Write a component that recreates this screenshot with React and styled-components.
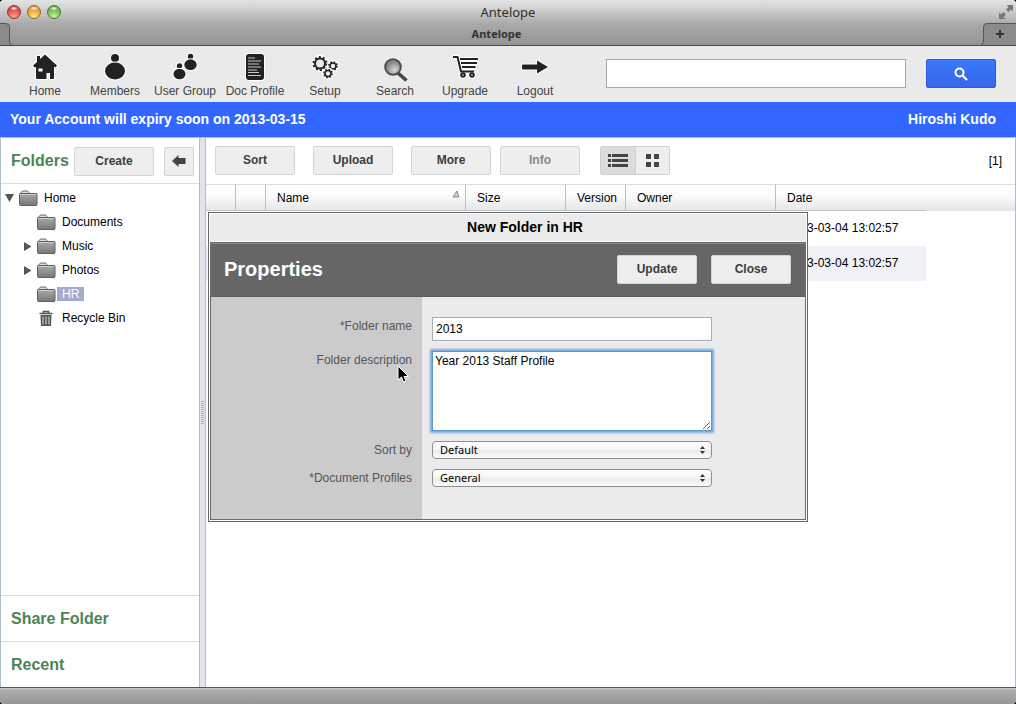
import React from "react";
import styled, { createGlobalStyle, css } from "styled-components";

const GlobalStyle = createGlobalStyle`
  *, *::before, *::after { box-sizing: border-box; }
  body { margin: 0; background: #000; }
  body, button, input, textarea, select {
    font-family: "Liberation Sans", Arial, sans-serif;
    font-size: 12px;
    line-height: 16px;
  }
  h1, h2, h3, p, ul { margin: 0; padding: 0; }
  svg { display: block; }
`;

const Window = styled.div`
  min-height: 100vh;
  display: flex;
  flex-direction: column;
  overflow: hidden;
  border-radius: 4px;
  background: #fff;
  color: #000;
`;

/* ---------- window chrome ---------- */

const Chrome = styled.header`
  background: linear-gradient(#e4e4e4, #c9c9c9 12px, #a9a9a9 24px, #949494);
  border-bottom: 1px solid #4a4a4a;
`;

const TitleBar = styled.div`
  height: 23px;
  display: grid;
  grid-template-columns: 100px 1fr 100px;
  align-items: center;
  padding: 0 3px;
`;

const Lights = styled.div`
  display: flex;
  gap: 6px;
  padding-left: 4px;
`;

const Light = styled.button`
  width: 14px;
  height: 14px;
  padding: 0;
  border: 1px solid ${(p) => p.$edge};
  border-radius: 50%;
  background: radial-gradient(ellipse 4px 2px at 50% 20%, #fff, transparent),
    radial-gradient(circle at 50% 90%, ${(p) => p.$glow}, ${(p) => p.$tone} 70%);
`;

const WindowTitle = styled.h1`
  text-align: center;
  font: 400 13px/16px "Noto Sans", sans-serif;
  color: #2e2e2e;
`;

const ExpandButton = styled.button`
  justify-self: end;
  padding: 0;
  border: 0;
  background: none;
`;

const TabBar = styled.div`
  height: 22px;
  display: flex;
`;

const ActiveTab = styled.div`
  flex: 1;
  text-align: center;
  font: 700 11px/22px "Noto Sans", sans-serif;
  color: #333;
`;

const NewTab = styled.button`
  padding: 0;
  border: 0;
  background: none;
`;

/* ---------- top navigation ---------- */

const TopNav = styled.div`
  min-height: 56px;
  display: flex;
  justify-content: space-between;
  padding: 0 20px 0 10px;
  background: #eaeaea;
`;

const NavList = styled.nav`
  display: flex;
`;

const NavLink = styled.a`
  width: 70px;
  padding-top: 6px;
  display: flex;
  flex-direction: column;
  align-items: center;
  gap: 1px;
  color: #444;
  text-decoration: none;
  white-space: nowrap;
`;

const SearchForm = styled.form`
  display: flex;
  gap: 20px;
  padding-top: 13px;
`;

const SearchInput = styled.input`
  width: 300px;
  height: 29px;
  border: 1px solid #a9a9a9;
  border-radius: 0;
  background: #fff;
`;

const SearchButton = styled.button`
  width: 70px;
  height: 29px;
  display: grid;
  place-items: center;
  padding: 0;
  border: 1px solid #2f5bd8;
  border-radius: 2px;
  background: linear-gradient(#3c78fb, #3567ea);
`;

const Banner = styled.div`
  min-height: 35px;
  display: flex;
  justify-content: space-between;
  padding: 9px 20px 0 10px;
  background: #3366ff;
  color: #fff;
  font-size: 14px;
  font-weight: 700;
`;

/* ---------- shared ---------- */

const Button = styled.button`
  width: ${(p) => (p.$compact ? 30 : 80)}px;
  height: 29px;
  display: grid;
  place-items: center;
  padding: 0 0 1px;
  border: 1px solid #d4d4d4;
  border-radius: 2px;
  background: #eee;
  color: ${(p) => (p.disabled ? "#888" : "#3c3c3c")};
  font-weight: 700;
`;

/* ---------- body ---------- */

const Workspace = styled.div`
  flex: 1;
  display: flex;
  border: solid #aebfc7;
  border-width: 1px 1px 0;
`;

const Sidebar = styled.aside`
  width: 198px;
  display: flex;
  flex-direction: column;
`;

const SidebarHeader = styled.div`
  height: 46px;
  display: flex;
  align-items: center;
  padding: 0 5px 0 10px;
  border-bottom: 1px solid #d9dfe2;
  justify-content: space-between;
`;

const SidebarTitle = styled.h2`
  font-size: 16px;
  line-height: 20px;
  font-weight: 700;
  color: #4b8555;
`;

const HeaderButtons = styled.div`
  display: flex;
  gap: 10px;
  padding-top: 1px;
`;

const Tree = styled.ul`
  flex: 1;
  padding-top: 2px;
  list-style: none;
`;

const TreeItem = styled.li`
  height: 24px;
  display: grid;
  grid-template-columns: 12px 19px 1fr;
  column-gap: 3px;
  align-items: center;
  padding-left: ${(p) => (p.$depth ? 21 : 3)}px;
`;

const TreeLabel = styled.span`
  justify-self: start;
  padding: 0 5px;
  line-height: 14px;
  margin-left: -2px;
  ${(p) =>
    p.$selected &&
    css`
      background: #a5abcd;
      color: #fff;
    `}
`;

const Section = styled.section`
  height: 46px;
  display: flex;
  align-items: center;
  padding-left: 10px;
  border-top: 1px solid #d9dfe2;
`;

const Splitter = styled.div`
  width: 7px;
  display: grid;
  place-items: center;
  border: solid #aebfc7;
  border-width: 0 1px;
  background: #e1e4ea;
`;

const Grip = styled.div`
  width: 3px;
  height: 24px;
  background: repeating-linear-gradient(#a9b6c8 0 1px, transparent 1px 2px);
`;

const Main = styled.main`
  flex: 1;
  min-width: 0;
  position: relative;
`;

const Actions = styled.div`
  height: 46px;
  display: flex;
  align-items: center;
  gap: 9px;
  padding: 0 13px 2px 9px;
`;

const ActionGroup = styled.div`
  display: flex;
  gap: 18px;
`;

const ViewSwitch = styled.div`
  display: flex;
  margin-left: 11px;
  border: 1px solid #d0d0d0;
  border-radius: 2px;
`;

const ViewButton = styled.button`
  width: 34px;
  height: 27px;
  display: grid;
  place-items: center;
  padding: 0;
  border: 0;
  background: ${(p) => (p.$active ? "#dcdcdc" : "#eee")};
  & + & { border-left: 1px solid #d0d0d0; }
`;

const PageCount = styled.span`
  margin-left: auto;
  padding-top: 2px;
`;

const Files = styled.table`
  width: 100%;
  table-layout: fixed;
  border-collapse: separate;
  border-spacing: 0;
`;

const FilesHead = styled.thead`
  th {
    height: 27px;
    padding: 0 0 0 11px;
    background: linear-gradient(#fff, #fbfbfc 40%, #e6e7ea);
    border-top: 1px solid #dcdfe2;
    border-bottom: 1px solid #b9c4cb;
    border-right: 1px solid #b4c0c8;
    text-align: left;
    font-weight: 400;
  }
  th:nth-last-child(-n + 2) { border-right: 0; }
  th:last-child { border-bottom-color: #e2e2e4; }
`;

const HeadCell = styled.div`
  display: flex;
  justify-content: space-between;
  padding-right: 5px;
`;

const Row = styled.tr`
  td {
    height: 35px;
    padding: 0 0 2px 11px;
    white-space: nowrap;
    overflow: hidden;
    background: ${(p) => (p.$striped ? "#eff1f5" : "#fff")};
  }
  td:last-child { background: #fff; }
`;

/* ---------- dialog ---------- */

const Dialog = styled.section`
  position: absolute;
  left: 2px;
  top: 74px;
  width: 600px;
  padding: 1px;
  border: 1px solid #666;
  background: #fff;
`;

const DialogTitle = styled.h2`
  padding: 0 0 1px 34px;
  background: #ebebeb;
  text-align: center;
  font-size: 14px;
  line-height: 26px;
  font-weight: 700;
`;

const Panel = styled.form`
  margin-top: 1px;
  border: 1px solid #6b6b6b;
`;

const PanelHeader = styled.div`
  height: 54px;
  display: flex;
  align-items: center;
  justify-content: space-between;
  padding: 0 14px 2px 13px;
  background: #666;
  border-bottom: 1px solid #5c5c5c;
  border-top: 1px solid #8a8a8a;
`;

const PanelTitle = styled.h3`
  color: #fff;
  font-size: 20px;
  line-height: 24px;
`;

const PanelButtons = styled.div`
  display: flex;
  gap: 14px;
`;

const Fields = styled.div`
  display: flex;
  flex-direction: column;
  gap: 10px;
  padding: 20px 0 32px;
  background: linear-gradient(to right, #cbcbcb 211px, #ebebeb 211px);
`;

const Field = styled.div`
  display: grid;
  grid-template-columns: 211px 280px;
  column-gap: 10px;
`;

const FieldLabel = styled.label`
  padding-top: 1px;
  padding-right: 10px;
  text-align: right;
  color: #555;
`;

const TextInput = styled.input`
  height: 24px;
  padding: 0 3px;
  border: 1px solid #a6adb3;
  border-radius: 0;
  background: #fff;
`;

const TextArea = styled.textarea`
  height: 80px;
  padding: 1px 2px;
  border: 1px solid #5e97cf;
  outline: 0;
  box-shadow: 0 0 2px 2px #79abdc;
  background: #fff;
`;

const SelectWrap = styled.div`
  position: relative;
`;

const Select = styled.select`
  display: block;
  width: 100%;
  height: 18px;
  appearance: none;
  padding: 0 7px;
  border: 1px solid #8f8f8f;
  border-radius: 4px;
  background: linear-gradient(#fff, #f4f4f4 50%, #ebebeb 51%, #fbfbfb);
  color: #000;
  font: 400 11px/16px "Noto Sans", sans-serif;
`;

const SelectArrows = styled.svg`
  position: absolute;
  right: 7px;
  top: 5px;
  pointer-events: none;
`;

const Pointer = styled.svg`
  position: absolute;
  left: 188px;
  top: 152px;
`;

const StatusBar = styled.footer`
  height: 17px;
  border-top: 1px solid #555;
  background: linear-gradient(#c4c4c4 1px, #adadad 2px, #969696);
`;

/* ---------- drawings ---------- */

const NavIcon = ({ children }) => (
  <svg width="30" height="30" viewBox="0 0 30 30" aria-hidden="true">
    {children}
  </svg>
);

const halo = { stroke: "#fff", strokeWidth: 2, paintOrder: "stroke", fill: "#222", strokeLinejoin: "round" };

const HomeIcon = () => (
  <NavIcon>
    <path {...halo} d="M15 2.500L27 13.500L25.500 15.500L24 14.500V26Q24 27 23 27H20V21H16.500V27H7.500Q6 27 6 26V15L4.500 15.500L3 13.500L7 10V4H10V7Z" />
    <rect x="8.500" y="16.500" width="4" height="3" fill="#fff" />
  </NavIcon>
);

const MemberIcon = () => (
  <NavIcon>
    <circle {...halo} cx="15" cy="6" r="4" />
    <ellipse {...halo} cx="15" cy="19" rx="10" ry="8.500" />
  </NavIcon>
);

const GroupIcon = () => (
  <NavIcon>
    <circle {...halo} cx="20.500" cy="4.500" r="2.700" />
    <ellipse {...halo} cx="20.500" cy="12.700" rx="6.200" ry="5.400" />
    <circle {...halo} cx="9.500" cy="14" r="2.700" />
    <ellipse {...halo} cx="9.500" cy="22" rx="6" ry="5.200" />
  </NavIcon>
);

const DocIcon = () => (
  <NavIcon>
    <rect {...halo} x="6" y="2" width="18" height="26" rx="3" />
    <path
      d="M8 6H15M8 9H21M8 12H19M8 15H21M8 18H17M8 20.500H19M8 23.500H21"
      stroke="#c8c8c8"
      strokeWidth="1"
      fill="none"
    />
  </NavIcon>
);

const Gear = ({ x, y, r, w, teeth }) => {
  const edge = r + w * 0.75;
  const step = (Math.PI * edge) / teeth;
  return (
    <g fill="none" stroke="#222">
      <circle cx={x} cy={y} r={edge + 1} stroke="#fff" strokeWidth="2" />
      <circle cx={x} cy={y} r={r} strokeWidth={w} />
      <circle cx={x} cy={y} r={edge} strokeWidth={w} strokeDasharray={`${step} ${step}`} />
    </g>
  );
};

const SetupIcon = () => (
  <NavIcon>
    <Gear x={10} y={11.5} r={5} w={2} teeth={10} />
    <Gear x={23} y={14} r={3} w={1.5} teeth={8} />
    <Gear x={18} y={21.5} r={3} w={1.5} teeth={8} />
  </NavIcon>
);

const MagnifierIcon = () => (
  <NavIcon>
    <defs>
      <radialGradient id="lens" cx="0.6" cy="0.7">
        <stop offset="0" stopColor="#d6d6d6" />
        <stop offset="1" stopColor="#8a8a8a" />
      </radialGradient>
    </defs>
    <path d="M18 21L26.500 28.500" stroke="#444" strokeWidth="3.500" />
    <circle cx="13" cy="15" r="7.800" fill="url(#lens)" stroke="#505050" strokeWidth="2" />
  </NavIcon>
);

const CartShape = () => (
  <>
    <path d="M3 5H7.500L11 19.500H24" />
    <path d="M10 7H28M11 11H27M12 15H25.500" />
    <circle cx="13" cy="23" r="1.800" />
    <circle cx="22" cy="23" r="1.800" />
  </>
);

const CartIcon = () => (
  <NavIcon>
    <g fill="none" stroke="#fff" strokeWidth="4"><CartShape /></g>
    <g fill="none" stroke="#222" strokeWidth="2"><CartShape /></g>
  </NavIcon>
);

const LogoutIcon = () => (
  <NavIcon>
    <path {...halo} d="M3 12.500Q2 12.500 2 13.500V16.500Q2 17.500 3 17.500H17V21.500L28 15L17 8.500V12.500Z" />
  </NavIcon>
);

const FolderIcon = () => (
  <svg width="19" height="17" viewBox="0 0 19 17" aria-hidden="true">
    <defs>
      <linearGradient id="folder" x2="0" y2="1">
        <stop offset="0" stopColor="#aaa" />
        <stop offset="1" stopColor="#777" />
      </linearGradient>
    </defs>
    <path d="M2 4V2.500L3.500 1H8.500L10 2.500V4" fill="#ddd" stroke="#666" />
    <path d="M0.500 4.500Q0.500 3.500 1.500 3.500H17Q18 3.500 18 4.500V14.500Q18 15.500 17 15.500H1.500Q0.500 15.500 0.500 14.500Z" fill="url(#folder)" stroke="#5e5e5e" />
    <path d="M1.500 4.500H17" stroke="#ccc" />
  </svg>
);

const TrashIcon = () => (
  <svg width="19" height="17" viewBox="0 0 19 17" aria-hidden="true">
    <path d="M2.500 3.500H15.500M6.500 3V1.500H11.500V3" fill="none" stroke="#555" strokeWidth="1.500" />
    <path d="M3.500 5H14.500L14 16H4Z" fill="#555" />
    <path d="M6 6.500V14.500M9 6.500V14.500M12 6.500V14.500" stroke="#ddd" strokeWidth="1" />
  </svg>
);

const Twisty = ({ open }) => (
  <svg width="12" height="10" viewBox="0 0 12 10" aria-hidden="true">
    <path d={open ? "M1 1H10L5.500 9Z" : "M2 1V10L9.500 5.500Z"} fill="#555" />
  </svg>
);

const NAV = [
  ["Home", HomeIcon],
  ["Members", MemberIcon],
  ["User Group", GroupIcon],
  ["Doc Profile", DocIcon],
  ["Setup", SetupIcon],
  ["Search", MagnifierIcon],
  ["Upgrade", CartIcon],
  ["Logout", LogoutIcon],
];

const FOLDERS = [
  { name: "Home", depth: 0, twisty: "open" },
  { name: "Documents", depth: 1 },
  { name: "Music", depth: 1, twisty: "closed" },
  { name: "Photos", depth: 1, twisty: "closed" },
  { name: "HR", depth: 1, selected: true },
  { name: "Recycle Bin", depth: 1, trash: true },
];

const COLUMNS = [
  ["", 30],
  ["", 30],
  ["Name", 200],
  ["Size", 100],
  ["Version", 60],
  ["Owner", 150],
  ["Date", 150],
];

const DATES = ["2013-03-04 13:02:57", "2013-03-04 13:02:57"];

function SelectField({ id, label, value }) {
  return (
    <Field>
      <FieldLabel htmlFor={id}>{label}</FieldLabel>
      <SelectWrap>
        <Select id={id} defaultValue={value}>
          <option>{value}</option>
        </Select>
        <SelectArrows width="5" height="8" viewBox="0 0 5 8" aria-hidden="true">
          <path d="M0 3L2.500 0L5 3ZM0 5L2.500 8L5 5Z" fill="#333" />
        </SelectArrows>
      </SelectWrap>
    </Field>
  );
}

function FolderDialog() {
  return (
    <Dialog role="dialog" aria-labelledby="dialog-title">
      <DialogTitle id="dialog-title">New Folder in HR</DialogTitle>
      <Panel>
        <PanelHeader>
          <PanelTitle>Properties</PanelTitle>
          <PanelButtons>
            <Button type="button">Update</Button>
            <Button type="button">Close</Button>
          </PanelButtons>
        </PanelHeader>
        <Fields>
          <Field>
            <FieldLabel htmlFor="name">*Folder name</FieldLabel>
            <TextInput id="name" defaultValue="2013" />
          </Field>
          <Field>
            <FieldLabel htmlFor="description">Folder description</FieldLabel>
            <TextArea id="description" defaultValue="Year 2013 Staff Profile" spellCheck={false} />
          </Field>
          <SelectField id="sort" label="Sort by" value="Default" />
          <SelectField id="profiles" label="*Document Profiles" value="General" />
        </Fields>
      </Panel>
      <Pointer width="13" height="20" viewBox="0 0 13 20" aria-hidden="true">
        <path d="M1 1V15L4.500 12L6.500 17L9 16L7 11.500H11.500Z" fill="#000" stroke="#fff" />
      </Pointer>
    </Dialog>
  );
}

export default function App() {
  return (
    <Window>
      <GlobalStyle />
      <Chrome>
        <TitleBar>
          <Lights>
            <Light aria-label="Close window" $edge="#8c3330" $tone="#dc4341" $glow="#ff9d96" />
            <Light aria-label="Minimize" $edge="#94662a" $tone="#e59a34" $glow="#ffe37a" />
            <Light aria-label="Zoom" $edge="#4a7636" $tone="#6bb04c" $glow="#c3f59a" />
          </Lights>
          <WindowTitle>Antelope</WindowTitle>
          <ExpandButton aria-label="Full screen">
            <svg width="14" height="14" viewBox="0 0 14 14">
              <path d="M7.500 0H14V6.500L12 4.500L9.500 7L7 4.500L9.500 2ZM0 7.500V14H6.500L4.500 12L7 9.500L4.500 7L2 9.500Z" fill="#777" />
            </svg>
          </ExpandButton>
        </TitleBar>
        <TabBar>
          <svg width="12" height="22" viewBox="0 0 12 22" aria-hidden="true">
            <path d="M0 0.500H6Q9.500 0.500 9.500 4V18Q9.500 22 12 22H0Z" fill="#8b8b8b" />
            <path d="M0 0.500H6Q9.500 0.500 9.500 4V18Q9.500 22 12 22" fill="none" stroke="#555" />
          </svg>
          <ActiveTab>Antelope</ActiveTab>
          <NewTab aria-label="New tab">
            <svg width="35" height="22" viewBox="0 0 35 22">
              <path d="M35 0.500H6Q2.500 0.500 2.500 4V18Q2.500 22 0 22H35Z" fill="#8b8b8b" />
              <path d="M35 0.500H6Q2.500 0.500 2.500 4V18Q2.500 22 0 22" fill="none" stroke="#555" />
              <path d="M19 7V15M15 11H23" stroke="#333" strokeWidth="2" />
            </svg>
          </NewTab>
        </TabBar>
      </Chrome>

      <TopNav>
        <NavList>
          {NAV.map(([name, Icon]) => (
            <NavLink href="#" key={name}>
              <Icon />
              {name}
            </NavLink>
          ))}
        </NavList>
        <SearchForm>
          <SearchInput aria-label="Search files" />
          <SearchButton type="button" aria-label="Search">
            <svg width="14" height="14" viewBox="0 0 14 14">
              <circle cx="5.500" cy="5.500" r="4" fill="none" stroke="#fff" strokeWidth="2" />
              <path d="M8.500 8.500L13 13" stroke="#fff" strokeWidth="2.200" />
            </svg>
          </SearchButton>
        </SearchForm>
      </TopNav>

      <Banner>
        <p>Your Account will expiry soon on 2013-03-15</p>
        <p>Hiroshi Kudo</p>
      </Banner>

      <Workspace>
        <Sidebar>
          <SidebarHeader>
            <SidebarTitle>Folders</SidebarTitle>
            <HeaderButtons>
              <Button>Create</Button>
              <Button $compact aria-label="Back">
                <svg width="14" height="12" viewBox="0 0 14 12">
                  <path d="M0 6L6.500 0V3H13.500V9H6.500V12Z" fill="#444" />
                </svg>
              </Button>
            </HeaderButtons>
          </SidebarHeader>
          <Tree>
            {FOLDERS.map((f) => (
              <TreeItem key={f.name} $depth={f.depth}>
                {f.twisty ? <Twisty open={f.twisty === "open"} /> : <span />}
                {f.trash ? <TrashIcon /> : <FolderIcon />}
                <TreeLabel $selected={f.selected}>{f.name}</TreeLabel>
              </TreeItem>
            ))}
          </Tree>
          <Section>
            <SidebarTitle>Share Folder</SidebarTitle>
          </Section>
          <Section>
            <SidebarTitle>Recent</SidebarTitle>
          </Section>
        </Sidebar>
        <Splitter>
          <Grip />
        </Splitter>
        <Main>
          <Actions>
            <ActionGroup>
              <Button>Sort</Button>
              <Button>Upload</Button>
              <Button>More</Button>
            </ActionGroup>
            <Button disabled>Info</Button>
            <ViewSwitch>
              <ViewButton $active aria-label="List view">
                <svg width="20" height="13" viewBox="0 0 20 13">
                  <path d="M0 0H3V3H0ZM4 0H20V3H4ZM0 5H3V8H0ZM4 5H20V8H4ZM0 10H3V13H0ZM4 10H20V13H4Z" fill="#444" />
                </svg>
              </ViewButton>
              <ViewButton aria-label="Grid view">
                <svg width="13" height="13" viewBox="0 0 13 13">
                  <path d="M0 0H5V5H0ZM8 0H13V5H8ZM0 8H5V13H0ZM8 8H13V13H8Z" fill="#444" />
                </svg>
              </ViewButton>
            </ViewSwitch>
            <PageCount>[1]</PageCount>
          </Actions>
          <Files>
            <colgroup>
              {COLUMNS.map(([, width], i) => (
                <col key={i} width={width} />
              ))}
              <col />
            </colgroup>
            <FilesHead>
              <tr>
                {COLUMNS.map(([name], i) => (
                  <th key={i} scope="col">
                    <HeadCell>
                      {name}
                      {name === "Name" && (
                        <svg width="8" height="8" viewBox="0 0 8 8" aria-hidden="true">
                          <path d="M1 7L5 1L7 7Z" fill="#ccc" stroke="#888" />
                        </svg>
                      )}
                    </HeadCell>
                  </th>
                ))}
                <th aria-hidden="true" />
              </tr>
            </FilesHead>
            <tbody>
              {DATES.map((date, i) => (
                <Row key={i} $striped={i % 2 === 1}>
                  <td colSpan={6} />
                  <td>{date}</td>
                  <td />
                </Row>
              ))}
            </tbody>
          </Files>
          <FolderDialog />
        </Main>
      </Workspace>
      <StatusBar />
    </Window>
  );
}
